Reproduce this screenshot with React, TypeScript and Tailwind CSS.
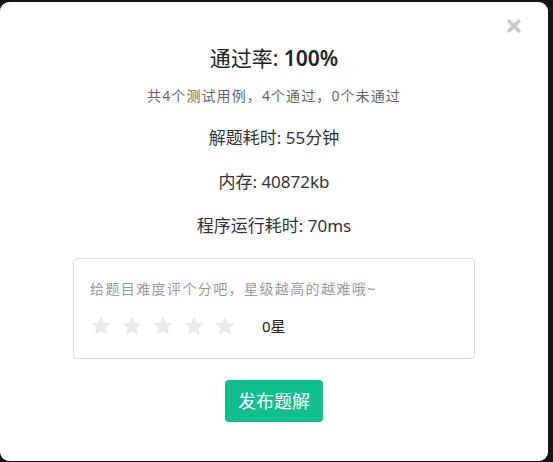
import React from 'react'

// Types
type StarProps = {
  filled?: boolean
}

function Star({ filled = false }: StarProps) {
  return (
    <svg width="22" height="22" viewBox="0 0 24 24">
      <path
        d="M12 1.5l3.1 6.9 7.4.7-5.6 5 1.7 7.4L12 17.6l-6.6 3.9 1.7-7.4-5.6-5 7.4-.7z"
        fill={filled ? '#f7ba2a' : '#e9e9e9'}
      />
    </svg>
  )
}

function CloseIcon() {
  return (
    <svg width="16" height="16" viewBox="0 0 16 16">
      <path
        d="M3 3l10 10M13 3L3 13"
        stroke="#c9c9c9"
        strokeWidth="3.4"
        strokeLinecap="round"
      />
    </svg>
  )
}

export default function App() {
  const stats = ['解题耗时: 55分钟', '内存: 40872kb', '程序运行耗时: 70ms']

  return (
    <div
      className="w-[553px] h-[462px] bg-[#131517] overflow-hidden"
      style={{ fontFamily: '"Noto Sans", "Noto Sans CJK SC", sans-serif' }}
    >
      {/* Dialog */}
      <div className="relative mt-[2px] w-[548px] h-[459px] bg-white rounded-[9px] flex flex-col items-center pt-[42px]">
        <button className="absolute top-[16px] right-[26px] w-[16px] h-[16px]">
          <CloseIcon />
        </button>

        <h3 className="text-[21px] leading-[28px] text-[#222]">
          通过率: <span className="font-semibold">100%</span>
        </h3>
        <p className="mt-[14px] text-[14px] leading-[20px] tracking-[1.1px] text-[#666]">
          共4个测试用例，4个通过，0个未通过
        </p>

        {stats.map((s) => (
          <p key={s} className="mt-[20px] text-[17px] leading-[24px] text-[#333]">
            {s}
          </p>
        ))}

        {/* Rating */}
        <div className="mt-[20px] w-[402px] h-[101px] border border-[#dcdcdc] rounded-[4px] px-[16px] pt-[20px]">
          <p className="text-[14px] leading-[20px] tracking-[1.4px] text-[#999]">
            给题目难度评个分吧，星级越高的越难哦~
          </p>
          <div className="mt-[15px] flex items-center h-[24px]">
            <div className="flex gap-[9px]">
              {[0, 1, 2, 3, 4].map((i) => (
                <Star key={i} />
              ))}
            </div>
            <span className="ml-[26px] text-[15px] text-[#222]">0星</span>
          </div>
        </div>

        <button className="mt-[21px] w-[98px] h-[42px] rounded-[4px] bg-[#0fbf8e] text-white text-[18px]">
          发布题解
        </button>
      </div>
    </div>
  )
}
